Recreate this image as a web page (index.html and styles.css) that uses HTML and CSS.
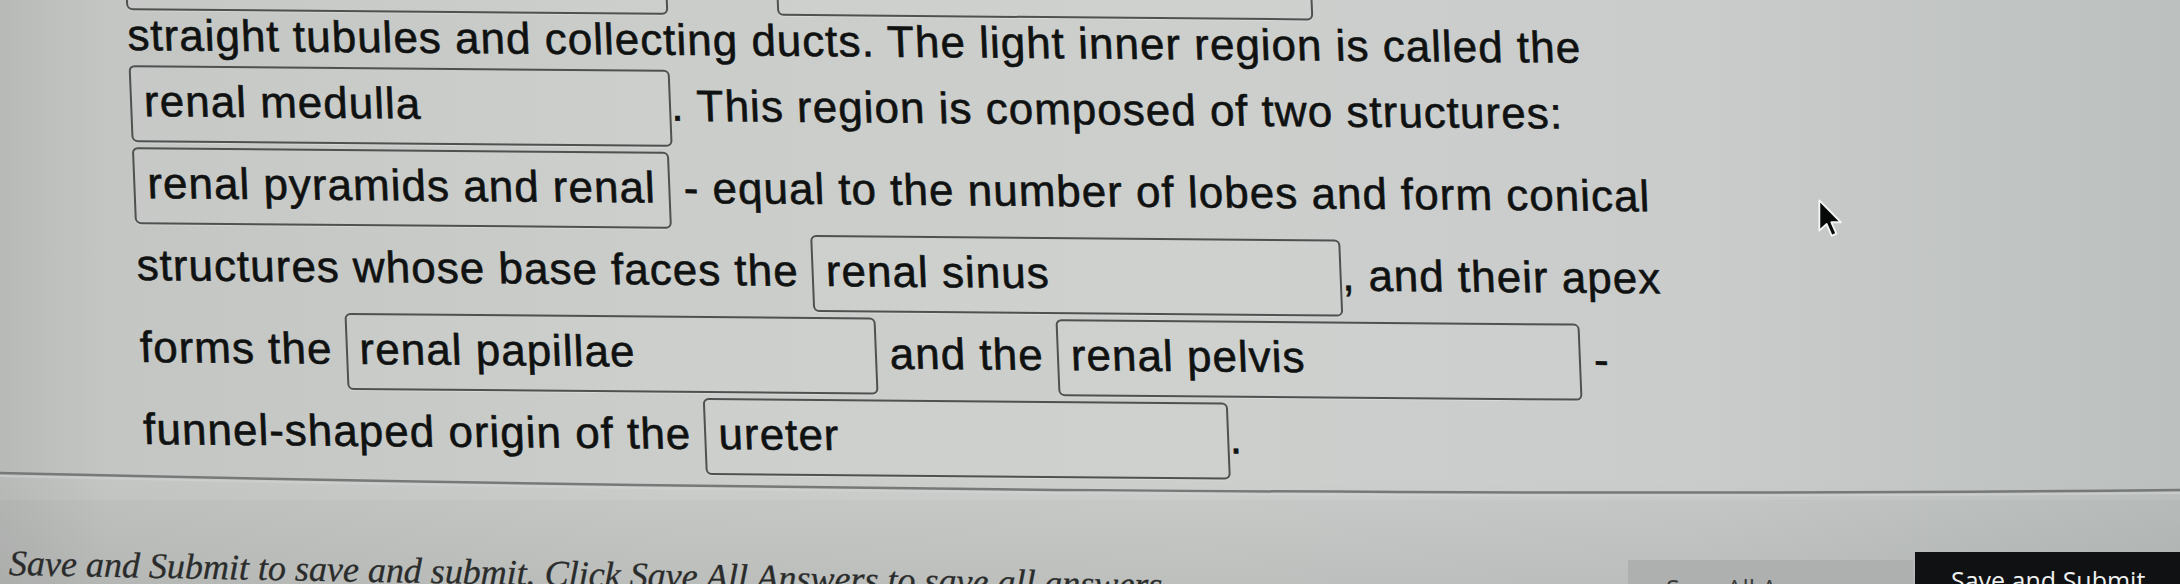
FILE: index.html
```html
<!DOCTYPE html>
<html lang="en">
<head>
<meta charset="utf-8">
<title>Kidney structure – fill in the blanks</title>
<link rel="stylesheet" href="styles.css">
</head>
<body>
<div class="sheet">
  <div class="row row--top">
    <span class="blank blank--a"></span>
    <span class="blank blank--b"></span>
  </div>
  <div class="row row--lead">
    <span class="t">straight tubules and collecting ducts. The light inner region is called the</span>
  </div>
  <div class="row row--first">
    <span class="blank blank--medulla">renal medulla</span><span class="t">. This region is composed of two structures:</span>
  </div>
  <div class="row">
    <span class="blank blank--pyramids">renal pyramids and renal</span><span class="t"> - equal to the number of lobes and form conical</span>
  </div>
  <div class="row">
    <span class="t">structures whose base faces the </span><span class="blank blank--sinus">renal sinus</span><span class="t">, and their apex</span>
  </div>
  <div class="row">
    <span class="t">forms the </span><span class="blank blank--papillae">renal papillae</span><span class="t"> and the </span><span class="blank blank--pelvis">renal pelvis</span><span class="t"> -</span>
  </div>
  <div class="row">
    <span class="t">funnel-shaped origin of the </span><span class="blank blank--ureter">ureter</span><span class="t">.</span>
  </div>
</div>
<svg class="rule" width="2180" height="30" viewBox="0 0 2180 30" aria-hidden="true">
  <path d="M0 3 C 700 19 1500 27 2180 20" fill="none" stroke="#767978" stroke-width="2.5"/>
  <path d="M0 6 C 700 22 1500 30 2180 23" fill="none" stroke="#d2d4d3" stroke-width="2" opacity="0.6"/>
</svg>
<div class="footer">
  <p class="note">Save and Submit to save and submit. Click Save All Answers to save all answers.</p>
  <div class="actions">
    <span class="btn btn--secondary">Save All Answers</span>
    <span class="btn btn--primary">Save and Submit</span>
  </div>
</div>
<svg class="cursor" width="28" height="42" viewBox="0 0 24 36" aria-hidden="true">
  <path d="M2 2 L2 28 L8.3 22.3 L12.6 32.4 L16.6 30.6 L12.3 20.8 L20.5 20.8 Z" fill="#070808" stroke="#f4f5f5" stroke-width="1.6" stroke-linejoin="round"/>
</svg>
</body>
</html>
```
FILE: styles.css
```css
html, body {
  margin: 0;
  padding: 0;
}

body {
  position: relative;
  width: 2180px;
  height: 584px;
  overflow: hidden;
  font-family: "Liberation Sans", Arial, sans-serif;
  color: #101212;
  background:
    linear-gradient(180deg, rgba(0,0,0,0) 0%, rgba(0,0,0,0) 82%, rgba(60,64,62,0.08) 100%),
    linear-gradient(90deg, #b8bab8 0%, #c4c6c4 5%, #cbcdcb 30%, #cdcfcd 55%, #c9cccb 78%, #bcc0bf 100%);
}

/* question text block (photo is slightly skewed) */
.sheet {
  display: flex;
  flex-direction: column;
  height: 470px;
  padding-left: 126px;
  font-size: 44px;
  letter-spacing: 1px;
  -webkit-text-stroke: 0.6px #101212;
  transform: skew(2.3deg, 0.5deg);
  transform-origin: 0 0;
}

.row {
  display: flex;
  align-items: baseline;
  margin-top: 5px;
}

.row--top {
  align-items: flex-start;
  margin-top: -68px;
}

.row--lead {
  margin-top: 0;
}

.row--first {
  margin-top: 6px;
}

.t {
  white-space: pre;
  line-height: 49px;
}

.blank {
  box-sizing: border-box;
  height: 77px;
  padding: 9px 12px 0;
  line-height: 49px;
  white-space: nowrap;
  border: 2px solid #4e5150;
  border-radius: 6px;
  background: rgba(255, 255, 255, 0.05);
  box-shadow: 0 1px 0 rgba(255,255,255,0.25);
}

.blank--a { width: 542px; }
.blank--b { width: 536px; margin-left: 109px; }
.blank--medulla { width: 541px; }
.blank--pyramids { width: 537px; }
.blank--sinus { width: 530px; }
.blank--papillae { width: 531px; }
.blank--pelvis { width: 524px; }
.blank--ureter { width: 525px; }

/* separator */
.rule {
  display: block;
}

/* footer */
.footer {
  display: flex;
  align-items: flex-start;
  height: 84px;
  padding-left: 9px;
  background: rgba(90, 94, 92, 0.04);
}

.note {
  margin: 43px 0 0;
  font-family: "Liberation Serif", "Times New Roman", serif;
  font-style: italic;
  font-size: 36px;
  line-height: 40px;
  color: #2a2c2b;
  -webkit-text-stroke: 0.3px #2a2c2b;
  white-space: nowrap;
  transform: rotate(1.1deg);
  transform-origin: 0 50%;
}

.actions {
  display: flex;
  align-items: flex-start;
  gap: 2px;
  margin-left: auto;
  margin-right: -40px;
}

.btn {
  box-sizing: border-box;
  display: block;
  height: 64px;
  padding: 13px 36px 0;
  font-family: "Open Sans", "Liberation Sans", sans-serif;
  font-size: 25px;
  line-height: 30px;
  white-space: nowrap;
}

.btn--secondary {
  width: 285px;
  margin-top: 60px;
  padding-left: 38px;
  background: #aeb0af;
  color: #3b3d3c;
}

.btn--primary {
  width: 305px;
  margin-top: 52px;
  background: #0f1112;
  color: #eef0f0;
}

/* mouse pointer over the page */
.cursor {
  position: absolute;
  left: 1817px;
  top: 198px;
}
```
